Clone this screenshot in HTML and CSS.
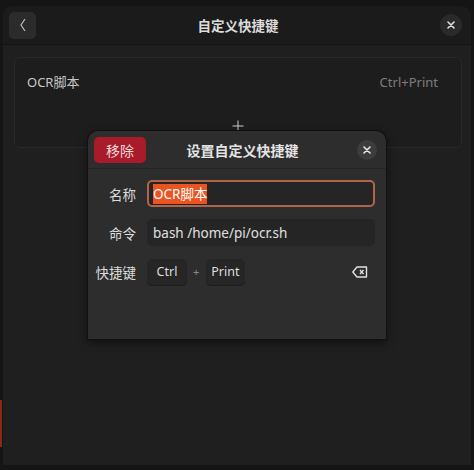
FILE: index.html
```html
<!DOCTYPE html>
<html lang="zh">
<head>
<meta charset="utf-8">
<link rel="stylesheet" href="styles.css">
</head>
<body>
<div class="dock-mark"></div>
<div class="window">
  <header class="headerbar">
    <button class="back-btn" aria-label="返回">
      <svg width="8" height="14" viewBox="0 0 8 14"><path d="M6 1 L2 7 L6 13" fill="none" stroke="#bdbdbd" stroke-width="1.2"/></svg>
    </button>
    <div class="title">自定义快捷键</div>
    <button class="close-btn" aria-label="关闭">
      <svg width="10" height="10" viewBox="0 0 10 10"><path d="M2 2 L8 8 M8 2 L2 8" stroke="#e0e0e0" stroke-width="1.6" stroke-linecap="round"/></svg>
    </button>
  </header>
  <main class="content">
    <div class="list">
      <div class="row">
        <span class="row-name">OCR脚本</span>
        <span class="row-accel">Ctrl+Print</span>
      </div>
      <div class="row add-row">
        <svg width="12" height="12" viewBox="0 0 12 12"><path d="M6 0.5 V11.5 M0.5 6 H11.5" stroke="#cfcfcf" stroke-width="1"/></svg>
      </div>
    </div>
  </main>

  <div class="dialog">
    <div class="dlg-header">
      <button class="remove-btn">移除</button>
      <div class="dlg-title">设置自定义快捷键</div>
      <button class="dlg-close" aria-label="关闭">
        <svg width="10" height="10" viewBox="0 0 10 10"><path d="M2 2 L8 8 M8 2 L2 8" stroke="#e6e6e6" stroke-width="1.6" stroke-linecap="round"/></svg>
      </button>
    </div>
    <div class="dlg-body">
      <div class="field-label">名称</div>
      <div class="entry focused"><span class="sel">OCR脚本</span></div>
      <div class="field-label">命令</div>
      <div class="entry">bash /home/pi/ocr.sh</div>
      <div class="field-label">快捷键</div>
      <div class="accel">
        <span class="keycap ctrl">Ctrl</span>
        <span class="plus">+</span>
        <span class="keycap">Print</span>
        <span class="spacer"></span>
        <svg class="clear-icon" width="16" height="12" viewBox="0 0 16 12"><path d="M5 1 H14.5 V11 H5 L0.8 6 Z" fill="none" stroke="#e0e0e0" stroke-width="1.4" stroke-linejoin="round"/><path d="M8 4 L11.5 8 M11.5 4 L8 8" stroke="#e0e0e0" stroke-width="1.4"/></svg>
      </div>
    </div>
  </div>
</div>
</body>
</html>
```
FILE: styles.css
```css
* { box-sizing: border-box; }
html, body {
  margin: 0;
  padding: 0;
  background: #151515;
  width: 474px;
  height: 470px;
  overflow: hidden;
  font-family: "Noto Sans", "Noto Sans CJK SC", sans-serif;
  font-size: 14px;
  color: #dedede;
}
body { padding: 6px 3px 5px 3px; position: relative; }
.dock-mark {
  position: absolute;
  left: 0;
  top: 400px;
  width: 2px;
  height: 47px;
  background: #8a2a16;
}
.window {
  position: relative;
  height: 459px;
  background: #1f1f1f;
  border-radius: 10px 10px 0 0;
  display: flex;
  flex-direction: column;
  overflow: hidden;
}
.headerbar {
  height: 39px;
  flex: none;
  background: #1b1b1b;
  border-bottom: 1px solid #141414;
  display: flex;
  align-items: center;
  padding: 0 6px;
}
button {
  font: inherit;
  border: none;
  padding: 0;
  color: inherit;
  cursor: pointer;
}
.back-btn {
  width: 27px;
  height: 27px;
  border-radius: 5px;
  background: #2b2b2b;
  display: flex;
  align-items: center;
  justify-content: center;
}
.title {
  flex: 1;
  text-align: center;
  font-weight: bold;
  font-size: 13.5px;
  color: #dcdcdc;
}
.close-btn {
  width: 22px;
  height: 22px;
  border-radius: 50%;
  background: #2a2a2a;
  display: flex;
  align-items: center;
  justify-content: center;
  margin-right: 3px;
}
.content {
  flex: 1;
  padding: 12px 9px 0 11px;
}
.list {
  border: 1px solid #282828;
  border-radius: 6px;
  background: #1d1d1d;
}
.row {
  height: 47px;
  display: flex;
  align-items: center;
  padding: 0 23px 0 12px;
}
.row-name { flex: 1; color: #c8c8c8; font-size: 13px; }
.row-accel { color: #7e7e7e; font-size: 13px; }
.add-row {
  height: 42px;
  justify-content: center;
  padding: 0;
}
.dialog {
  position: absolute;
  left: 85px;
  top: 125px;
  width: 298px;
  height: 208px;
  background: #2d2d2d;
  border-radius: 10px 10px 0 0;
  box-shadow: 0 0 0 1px #111, 0 3px 10px rgba(0,0,0,0.6);
  display: flex;
  flex-direction: column;
}
.dlg-header {
  height: 38px;
  display: flex;
  align-items: center;
  padding: 0 9px 0 6px;
  border-bottom: 1px solid #262626;
}
.remove-btn {
  width: 52px;
  height: 26px;
  border-radius: 5px;
  background: #a81b2b;
  color: #f3d7d7;
  font-size: 14px;
}
.dlg-title {
  flex: 1;
  text-align: center;
  font-weight: bold;
  color: #e4e4e4;
  padding-right: 18px;
}
.dlg-close {
  width: 20px;
  height: 20px;
  border-radius: 50%;
  background: #3d3d3d;
  display: flex;
  align-items: center;
  justify-content: center;
}
.dlg-body {
  display: grid;
  grid-template-columns: 48px 228px;
  column-gap: 11px;
  row-gap: 12px;
  align-items: center;
  padding: 11px 0 0 0;
}
.field-label {
  text-align: right;
  color: #dcdcdc;
  font-size: 13.5px;
}
.entry {
  height: 27px;
  border-radius: 5px;
  background: #252525;
  display: flex;
  align-items: center;
  padding: 0 6px;
  color: #e0e0e0;
  font-size: 13.5px;
}
.entry.focused {
  border: 2px solid #b0654b;
  padding: 0 4px;
}
.sel {
  background: #e95420;
  color: #ffffff;
  line-height: 20px;
}
.accel {
  display: flex;
  align-items: center;
  height: 27px;
}
.keycap {
  height: 26px;
  padding: 0 5px;
  border-radius: 5px;
  background: #262626;
  box-shadow: 0 1px 0 #1c1c1c;
  display: flex;
  align-items: center;
  font-size: 12.5px;
  color: #dedede;
}
.keycap.ctrl { width: 40px; justify-content: center; }
.plus {
  color: #8a8a8a;
  font-size: 11px;
  padding: 0 7px 0 6px;
}
.spacer { flex: 1; }
.clear-icon { margin-right: 7px; }
```
